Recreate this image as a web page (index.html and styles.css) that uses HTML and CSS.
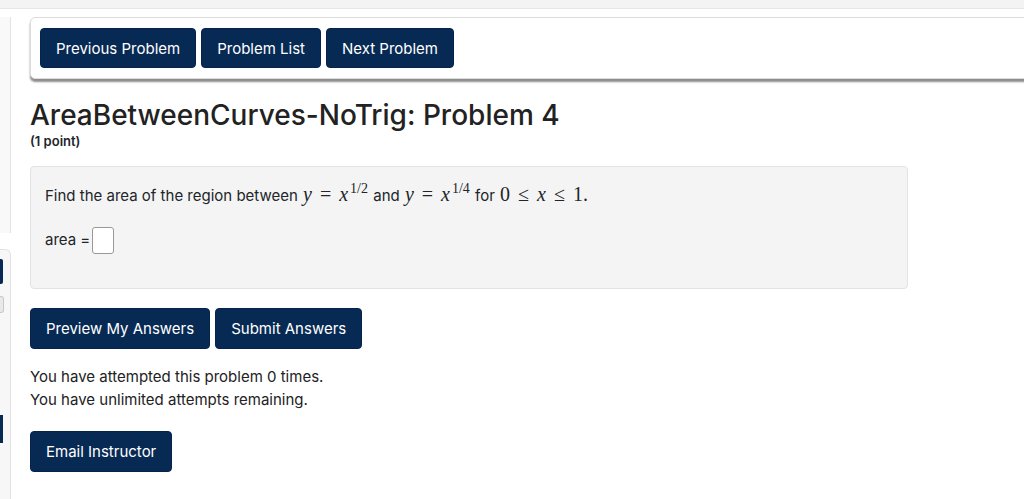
FILE: index.html
```html
<!DOCTYPE html>
<html>
<head>
<meta charset="utf-8">
<link rel="stylesheet" href="styles.css">
</head>
<body>
<div class="topbar"></div>
<div class="layout">
  <aside class="sidebar">
    <div class="side-top"></div>
    <div class="side-card">
      <div class="side-active"></div>
      <div class="side-field"></div>
      <div class="side-mark"></div>
    </div>
  </aside>
  <main class="main">
    <nav class="navcard">
      <button class="btn">Previous Problem</button>
      <button class="btn">Problem List</button>
      <button class="btn">Next Problem</button>
    </nav>
    <h1 class="title">AreaBetweenCurves-NoTrig: Problem 4</h1>
    <div class="points">(1 point)</div>
    <div class="problem">
      <p class="statement">Find the area of the region between <span class="math"><i>y</i><span class="rel">=</span><i>x</i><sup>1/2</sup></span> and <span class="math"><i>y</i><span class="rel">=</span><i>x</i><sup>1/4</sup></span> for <span class="math">0<span class="rel">≤</span><i>x</i><span class="rel">≤</span>1.</span></p>
      <p class="answer">area =<span class="ansbox"></span></p>
    </div>
    <div class="actions">
      <button class="btn btn-lg">Preview My Answers</button>
      <button class="btn btn-lg">Submit Answers</button>
    </div>
    <p class="attempts">You have attempted this problem 0 times.<br>You have unlimited attempts remaining.</p>
    <button class="btn btn-lg">Email Instructor</button>
  </main>
</div>
</body>
</html>
```

FILE: styles.css
```css
html, body {
  margin: 0;
  padding: 0;
  background: #fff;
  overflow: hidden;
  height: 499px;
}
body {
  font-family: Inter, "Liberation Sans", Arial, sans-serif;
  color: #212529;
}
.topbar {
  height: 8px;
  background: #f3f3f3;
  border-bottom: 1px solid #e6e6e6;
}
.layout {
  display: flex;
  height: 490px;
}
.sidebar {
  width: 11px;
  flex: none;
  display: flex;
  flex-direction: column;
  padding-top: 8px;
}
.side-top {
  height: 216px;
  background: #f9f9f9;
  border-right: 1px solid #e4e4e4;
  box-sizing: border-box;
}
.side-card {
  margin-top: 16px;
  flex: 1;
  background: #f7f7f7;
  border-top: 1px solid #e2e2e2;
  border-right: 1px solid #e2e2e2;
  border-top-right-radius: 6px;
  box-sizing: border-box;
  display: flex;
  flex-direction: column;
}
.side-active {
  margin-top: 9px;
  width: 3px;
  height: 25px;
  background: #072a55;
  border-radius: 0 2px 2px 0;
}
.side-field {
  margin-top: 12px;
  width: 3px;
  height: 15px;
  background: #e9e9e9;
  border: 1px solid #c8c8c8;
  border-left: none;
  border-radius: 0 3px 3px 0;
}
.side-mark {
  margin-top: 102px;
  width: 3px;
  height: 28px;
  background: #072a55;
}
.main {
  flex: 1;
  padding-left: 19px;
  padding-top: 8px;
  min-width: 0;
}
.navcard {
  display: flex;
  gap: 5px;
  padding: 10px 9px;
  margin-right: -20px;
  border: 1px solid #dcdcdc;
  border-radius: 5px;
  box-shadow: 0 3px 2px rgba(0,0,0,0.45);
  background: #fff;
}
.btn {
  font-family: Inter, "Liberation Sans", Arial, sans-serif;
  font-size: 15px;
  color: #fff;
  background: #072a55;
  border: 1px solid #06244a;
  border-radius: 4px;
  height: 40px;
  padding: 0 15px;
  cursor: pointer;
}
.btn-lg {
  height: 41px;
}
.title {
  margin: 19px 0 0;
  font-size: 28px;
  font-weight: 500;
  line-height: 34px;
  color: #222;
}
.points {
  font-size: 13px;
  font-weight: 600;
  margin-top: 1px;
  line-height: 16px;
}
.problem {
  margin-top: 17px;
  width: 878px;
  box-sizing: border-box;
  height: 123px;
  background: #f4f4f4;
  border: 1px solid #e3e3e3;
  border-radius: 4px;
  padding: 14px 14px;
  font-size: 15px;
}
.statement {
  margin: 0;
  line-height: 26px;
}
.math {
  font-family: "Liberation Serif", "Times New Roman", serif;
  font-size: 20px;
  padding: 0 1px;
}
.math i {
  font-style: italic;
}
.math sup {
  font-size: 14px;
  vertical-align: 8px;
  line-height: 0;
  padding-left: 2px;
}
.rel {
  padding: 0 8px;
}
.answer {
  margin: 17px 0 0;
  display: flex;
  align-items: center;
  line-height: 28px;
}
.ansbox {
  display: inline-block;
  width: 20px;
  height: 25px;
  margin-left: 2px;
  background: #fff;
  border: 1px solid #999;
  border-radius: 3px;
}
.actions {
  margin-top: 19px;
  display: flex;
  gap: 5px;
}
.attempts {
  margin: 16px 0 20px;
  font-size: 15px;
  line-height: 23px;
  color: #222;
}
```
